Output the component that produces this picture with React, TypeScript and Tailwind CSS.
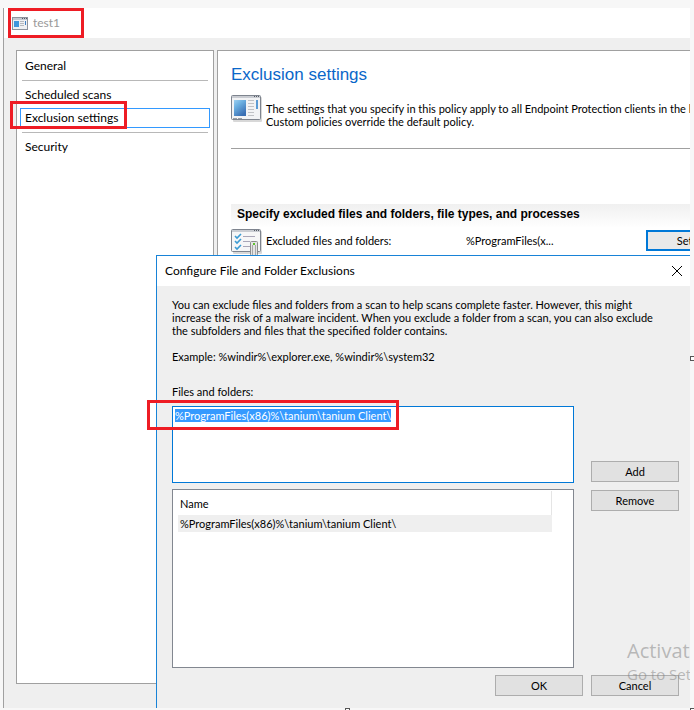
import { useEffect, useRef } from "react";
import type { ReactNode } from "react";

const EXCLUSION = "%ProgramFiles(x86)%\\tanium\\tanium Client\\";

function PolicyIcon({ className }: { className: string }) {
  return (
    <svg viewBox="0 0 31 27" className={className} aria-hidden="true">
      <defs>
        <linearGradient id="pane" x1="0" y1="0" x2="0.6" y2="1">
          <stop offset="0" stopColor="#9dd0f0" />
          <stop offset="0.4" stopColor="#6aaee0" />
          <stop offset="1" stopColor="#3a6fb4" />
        </linearGradient>
      </defs>
      <rect x="2" y="2" width="29" height="25" rx="1" fill="#d8d8d8" />
      <rect x="0.5" y="0.5" width="29" height="24" rx="1" fill="#f2f3f5" stroke="#7e848e" />
      <rect x="1" y="1" width="28" height="2" fill="#c9ccd2" />
      <path d="M23 1.5h1M25 1.5h1M27 1.5h1" stroke="#555b66" />
      <rect x="3" y="5" width="12" height="16" fill="url(#pane)" />
      <path d="M17 5.5h6M17 8.5h6M17 11.5h6M17 14.5h6M17 17.5h6M17 20.5h6" stroke="#c0c2c6" />
      <rect x="25" y="5" width="2" height="9" fill="#5b9bd5" />
      <path d="M2 23.5h4M7 23.5h4" stroke="#9aa0a8" />
    </svg>
  );
}

function WindowIcon() {
  return (
    <svg viewBox="0 0 16 13" className="h-[13px] w-4 shrink-0" aria-hidden="true">
      <rect x="0.5" y="0.5" width="15" height="12" fill="#eef0f3" stroke="#8d939d" />
      <rect x="1" y="1" width="14" height="2" fill="#c3c8d0" />
      <path d="M10 1.5h1M12 1.5h1M14 1.5h1" stroke="#555b66" />
      <rect x="2" y="4" width="5" height="6" fill="#3f97dc" />
      <path d="M8 4.5h4M8 6.5h4M8 8.5h4" stroke="#b4b8bf" />
      <path d="M13.5 4v4" stroke="#3f7fc4" />
    </svg>
  );
}

function ChecklistIcon() {
  return (
    <svg viewBox="0 0 31 27" className="h-[27px] w-[31px] shrink-0" aria-hidden="true">
      <rect x="2" y="2" width="29" height="23" rx="1" fill="#d8d8d8" />
      <rect x="0.5" y="0.5" width="29" height="22" rx="1" fill="#f6f6f7" stroke="#7e848e" />
      <rect x="1" y="1" width="28" height="2" fill="#c9ccd2" />
      <path d="M23 1.5h1M25 1.5h1M27 1.5h1" stroke="#555b66" />
      <path d="M4 7l2 2 4-4M4 12l2 2 4-4M4 18l2 2 4-4" fill="none" stroke="#3b9bd3" strokeWidth="1.6" />
      <path d="M12 7.5h12M12 12.5h7M12 17.5h7" stroke="#a9a6b8" />
      <rect x="19.5" y="12.5" width="7" height="14" rx="1" fill="#e4e4e4" stroke="#8c8c8c" />
      <path d="M21.5 16v11M24.5 16v11" stroke="#a8a8a8" />
      <rect x="22" y="14" width="2" height="2" fill="#5fc02c" />
    </svg>
  );
}

function PushButton({ children, className = "" }: { children: ReactNode; className?: string }) {
  return (
    <button
      type="button"
      className={`h-[21px] w-[88px] shrink-0 border border-[#adadad] bg-[#e1e1e1] text-center leading-[18px] ${className}`}
    >
      {children}
    </button>
  );
}

function Callout({ className }: { className: string }) {
  return <div className={`pointer-events-none absolute z-20 border-[3px] border-[#ee1c24] ${className}`} />;
}

function Sidebar() {
  const item = "block h-5 w-full border border-transparent px-1 text-left leading-[18px]";
  return (
    <nav className="relative w-[198px] shrink-0 border border-[#a0a0a0] bg-white px-[3px] pt-[5px] text-[12px]">
      <button type="button" className={item}>General</button>
      <hr className="mx-0.5 mt-1 mb-1 border-[#b8b8b8]" />
      <button type="button" className={item}>Scheduled scans</button>
      <button type="button" className="mt-[3px] block h-5 w-full border border-[#3399ff] px-1 text-left leading-[18px]">
        Exclusion settings
      </button>
      <hr className="mx-0.5 mt-1 mb-1 border-[#b8b8b8]" />
      <button type="button" className={item}>Security</button>
      <Callout className="top-[50px] -left-[7px] h-[28px] w-[117px]" />
    </nav>
  );
}

function PolicyPage() {
  return (
    <main className="min-w-0 flex-1 overflow-hidden border border-r-0 border-[#a0a0a0] bg-white pt-[13px] pl-[13px] whitespace-nowrap">
      <h1 className="font-['Liberation_Sans',Arial,sans-serif] text-[17px] leading-[22px] text-[#0a67c9]">
        Exclusion settings
      </h1>
      <div className="mt-[9px] flex gap-1">
        <PolicyIcon className="h-[27px] w-[31px] shrink-0" />
        <p className="pt-[7px] leading-[13px]">
          The settings that you specify in this policy apply to all Endpoint Protection clients in the hierarchy.
          <br />
          Custom policies override the default policy.
        </p>
      </div>
      <hr className="mt-5 border-[#a0a0a0]" />
      <h2 className="mt-[55px] h-[24px] bg-linear-to-b from-[#f0f0f0] to-white pl-1.5 font-['Liberation_Sans',Arial,sans-serif] text-[12px] leading-[20px] font-bold">
        Specify excluded files and folders, file types, and processes
      </h2>
      <div className="mt-px flex gap-1">
        <ChecklistIcon />
        <span className="w-[196px] shrink-0 leading-[24px]">Excluded files and folders:</span>
        <span className="w-[176px] shrink-0 leading-[24px]">%ProgramFiles(x...</span>
        <button
          type="button"
          className="mt-px h-[21px] w-[88px] shrink-0 border-2 border-[#0078d7] bg-[#e9e9e9] leading-[16px]"
        >
          Set ...
        </button>
      </div>
    </main>
  );
}

function ExclusionsDialog() {
  const input = useRef<HTMLTextAreaElement>(null);

  useEffect(() => {
    input.current?.focus();
    input.current?.select();
  }, []);

  return (
    <section
      role="dialog"
      aria-labelledby="dialog-title"
      className="absolute top-[247px] right-0 bottom-0 left-[152px] border-t border-l border-[#1883d7] bg-[#efefef]"
    >
      <header className="flex h-[30px] items-center justify-between bg-white pr-2 pl-2">
        <h2 id="dialog-title" className="text-[12px]">
          Configure File and Folder Exclusions
        </h2>
        <button type="button" aria-label="Close">
          <svg viewBox="0 0 10 10" className="h-[10px] w-[10px]" fill="none" stroke="black" aria-hidden="true">
            <path d="M0 0l10 10M10 0L0 10" />
          </svg>
        </button>
      </header>
      <div className="flex flex-col pt-3 pr-[11px] pl-[15px] leading-[13px]">
        <p className="whitespace-nowrap">
          You can exclude files and folders from a scan to help scans complete faster. However, this might
          <br />
          increase the risk of a malware incident. When you exclude a folder from a scan, you can also exclude
          <br />
          the subfolders and files that the specified folder contains.
        </p>
        <p className="mt-[13px]">Example: %windir%\explorer.exe, %windir%\system32</p>
        <label htmlFor="paths" className="mt-[22px]">Files and folders:</label>
        <div className="mt-2 flex justify-between">
          <div className="relative h-[77px] w-[402px]">
            <textarea
              id="paths"
              ref={input}
              defaultValue={EXCLUSION}
              spellCheck={false}
              className="block h-full w-full resize-none border border-[#0078d7] bg-white px-0.5 pt-0.5 leading-[13px] outline-none selection:bg-[#3399ff]/99 selection:text-white"
            />
            <Callout className="-top-[6px] -left-[25px] h-[30px] w-[252px]" />
          </div>
          <PushButton className="mt-[55px]">Add</PushButton>
        </div>
        <div className="mt-[6px] flex justify-between">
          <div className="h-[179px] w-[402px] border border-[#828790] bg-white pt-px pl-[5px]">
            <table className="w-[374px]">
              <thead>
                <tr>
                  <th className="h-6 border-r border-[#e5e5e5] pl-0.5 text-left font-normal">Name</th>
                </tr>
              </thead>
              <tbody>
                <tr>
                  <td className="h-[17px] bg-[#efefef] pl-0.5">{EXCLUSION}</td>
                </tr>
              </tbody>
            </table>
          </div>
          <PushButton className="mt-px">Remove</PushButton>
        </div>
        <footer className="mt-[7px] flex justify-end gap-2">
          <PushButton>OK</PushButton>
          <PushButton>Cancel</PushButton>
        </footer>
      </div>
      <div className="pointer-events-none absolute bottom-6 left-[470px] font-['Open_Sans',sans-serif] whitespace-nowrap text-[#808080]/50">
        <p className="text-[20px] leading-[26px]">Activate Windows</p>
        <p className="text-[15px] leading-[20px]">Go to Settings to activate Windows.</p>
      </div>
    </section>
  );
}

export default function App() {
  return (
    <div className="relative flex min-h-screen flex-col overflow-hidden bg-[#f7f7f7] pt-2 pr-1 pb-0.5 pl-[3px] font-[Lato,sans-serif] text-[11px] text-black">
      <div className="relative flex flex-1 flex-col overflow-hidden border-l border-[#a0a0a0] bg-[#efefef]">
        <header className="flex h-[30px] items-center gap-[5px] bg-white pl-2">
          <WindowIcon />
          <span className="text-[12px] text-[#999999]">test1</span>
          <Callout className="top-0 left-1 h-[30px] w-[76px]" />
        </header>
        <div className="flex flex-1 gap-[3px] pt-3 pb-6 pl-3">
          <Sidebar />
          <PolicyPage />
        </div>
        <ExclusionsDialog />
      </div>
      <div className="absolute -bottom-[3px] left-[345px] h-[5px] w-[5px] border border-[#555] bg-white" />
      <div className="absolute top-[356px] -right-px h-[5px] w-[5px] border border-[#555] bg-white" />
      <div className="absolute -right-px -bottom-[3px] h-[5px] w-[5px] border border-[#555] bg-white" />
    </div>
  );
}
